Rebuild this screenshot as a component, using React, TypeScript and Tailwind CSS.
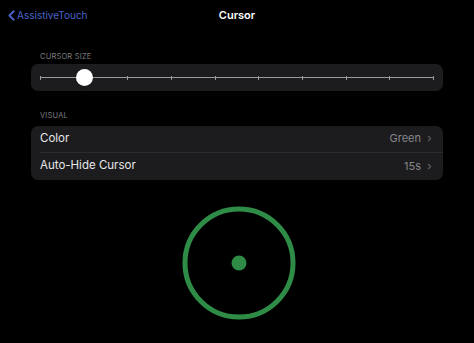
import { ChevronLeft, ChevronRight } from "lucide-react";

const TICKS = Array.from({ length: 10 }, (_, i) => i);

function SettingRow({ label, value, last }: { label: string; value: string; last?: boolean }) {
  return (
    <div className="flex h-[27px] items-center pl-[9px]">
      <div
        className={`flex h-full flex-1 items-center pr-[9px] ${
          last ? "" : "border-b border-[#2c2c2e]"
        }`}
      >
        <span className="flex-1 text-[11.5px] text-[#e8e8ea]">{label}</span>
        <span className="text-[11px] text-[#86868b]">{value}</span>
        <ChevronRight className="ml-[4px] h-[9px] w-[9px] text-[#5a5a5e]" strokeWidth={3} />
      </div>
    </div>
  );
}

export default function App() {
  return (
    <div
      className="relative h-[343px] w-[474px] overflow-hidden bg-black"
      style={{ fontFamily: "Inter, 'Liberation Sans', sans-serif" }}
    >
      {/* nav bar */}
      <div className="grid h-[30px] grid-cols-3 items-center">
        <div className="flex items-center pl-[3px] text-[#4b63c9]">
          <ChevronLeft className="h-[17px] w-[17px]" strokeWidth={2.6} />
          <span className="-ml-[3px] text-[10px]">AssistiveTouch</span>
        </div>
        <div className="text-center text-[11px] font-semibold text-white">Cursor</div>
        <div />
      </div>

      <div className="px-[31px]">
        {/* cursor size */}
        <div className="mt-[21px] pl-[9px] text-[7.5px] uppercase tracking-wide text-[#7c7c80]">
          Cursor Size
        </div>
        <div className="mt-[2px] flex h-[27px] items-center rounded-[7px] bg-[#1c1c1e] px-[9px]">
          <div className="relative h-[6px] flex-1">
            <div className="absolute left-0 right-0 top-[2.5px] h-px bg-[#9a9a9e]" />
            <div className="absolute inset-0 flex justify-between">
              {TICKS.map((t) => (
                <div key={t} className="mt-[1px] h-[4px] w-px bg-[#9a9a9e]" />
              ))}
            </div>
            <div className="absolute left-[36px] top-[-5.5px] h-[17px] w-[17px] rounded-full bg-white shadow" />
          </div>
        </div>

        {/* visual */}
        <div className="mt-[19px] pl-[9px] text-[7.5px] uppercase tracking-wide text-[#7c7c80]">
          Visual
        </div>
        <div className="mt-[4px] overflow-hidden rounded-[7px] bg-[#1c1c1e]">
          <SettingRow label="Color" value="Green" />
          <SettingRow label="Auto-Hide Cursor" value="15s" last />
        </div>
      </div>

      {/* cursor preview */}
      <div className="mt-[26px] flex justify-center pl-[4px]">
        <svg width="114" height="114" viewBox="0 0 114 114">
          <circle cx="57" cy="57" r="54" fill="none" stroke="#2f8c46" strokeWidth="5" />
          <circle cx="57" cy="57" r="7.5" fill="#2f8c46" />
        </svg>
      </div>
    </div>
  );
}
